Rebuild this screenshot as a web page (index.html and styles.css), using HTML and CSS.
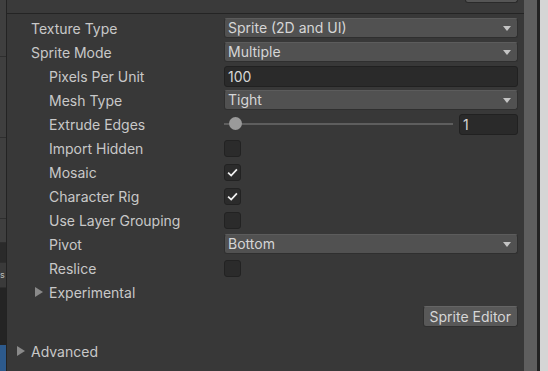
FILE: index.html
```html
<!DOCTYPE html>
<html lang="en">
<head>
  <meta charset="UTF-8" />
  <title>Import Settings</title>
  <link rel="stylesheet" href="styles.css">
</head>
<body>
  <div class="window">
    <div class="side">
      <div class="side-block b1"></div>
      <div class="side-block b2"></div>
      <div class="side-block b3"></div>
      <div class="side-block b4"></div>
      <div class="side-block b5"></div>
      <div class="side-block b6">s</div>
      <div class="side-block b7"></div>
      <div class="side-block b8"></div>
    </div>

    <div class="inspector">
      <div class="topbar">
        <div class="top-button"></div>
      </div>

      <div class="props">
        <div class="row">
          <span class="label">Texture Type</span>
          <div class="dropdown">Sprite (2D and UI)<span class="arrow"></span></div>
        </div>
        <div class="row">
          <span class="label">Sprite Mode</span>
          <div class="dropdown">Multiple<span class="arrow"></span></div>
        </div>
        <div class="row sub">
          <span class="label">Pixels Per Unit</span>
          <div class="textfield">100</div>
        </div>
        <div class="row sub">
          <span class="label">Mesh Type</span>
          <div class="dropdown">Tight<span class="arrow"></span></div>
        </div>
        <div class="row sub">
          <span class="label">Extrude Edges</span>
          <div class="slider">
            <div class="track"><span class="thumb"></span></div>
            <div class="textfield int">1</div>
          </div>
        </div>
        <div class="row sub">
          <span class="label">Import Hidden</span>
          <span class="checkbox"></span>
        </div>
        <div class="row sub">
          <span class="label">Mosaic</span>
          <span class="checkbox checked"><svg viewBox="0 0 10 8" width="11" height="9"><path d="M1 4.2 L3.8 6.8 L9 1.2" fill="none" stroke="#f0f0f0" stroke-width="1.6"/></svg></span>
        </div>
        <div class="row sub">
          <span class="label">Character Rig</span>
          <span class="checkbox checked"><svg viewBox="0 0 10 8" width="11" height="9"><path d="M1 4.2 L3.8 6.8 L9 1.2" fill="none" stroke="#f0f0f0" stroke-width="1.6"/></svg></span>
        </div>
        <div class="row sub">
          <span class="label">Use Layer Grouping</span>
          <span class="checkbox"></span>
        </div>
        <div class="row sub">
          <span class="label">Pivot</span>
          <div class="dropdown">Bottom<span class="arrow"></span></div>
        </div>
        <div class="row sub">
          <span class="label">Reslice</span>
          <span class="checkbox"></span>
        </div>
        <div class="row foldout sub">
          <span class="fold"></span><span class="label">Experimental</span>
        </div>

        <div class="button-row">
          <button class="btn">Sprite Editor</button>
        </div>

        <div class="row foldout top">
          <span class="fold"></span><span class="label">Advanced</span>
        </div>
      </div>
    </div>

    <div class="scrollbar"></div>
    <div class="edge"></div>
    <div class="outside"></div>
  </div>
</body>
</html>
```

FILE: styles.css
```css
html, body {
  margin: 0;
  padding: 0;
  background: #383838;
}

body {
  font-family: Inter, "Noto Sans", sans-serif;
  font-size: 14px;
  color: #c8c8c8;
}

.window {
  display: flex;
  width: 548px;
  height: 371px;
  overflow: hidden;
}

/* left neighbour panel */
.side {
  width: 6px;
  display: flex;
  flex-direction: column;
  border-right: 1px solid #232323;
}

.side-block {
  border-bottom: 1px solid #2e2e2e;
}

.b1 { height: 56px; background: #3f3f3f; }
.b2 { height: 80px; background: #3f3f3f; }
.b3 { height: 80px; background: #3f3f3f; }
.b4 { height: 23px; background: #3f3f3f; }
.b5 { height: 19px; background: #2a2a2a; }
.b6 {
  height: 24px;
  background: #3a3a3a;
  font-size: 9px;
  line-height: 24px;
  overflow: hidden;
  color: #bdbdbd;
}
.b7 { height: 57px; background: #242424; border-bottom: none; }
.b8 { flex: 1; background: #2d5a8c; border-bottom: none; }

/* inspector */
.inspector {
  width: 517px;
  display: flex;
  flex-direction: column;
}

.topbar {
  height: 13px;
  background: #3a3a3a;
  border-bottom: 1px solid #242424;
  display: flex;
  justify-content: flex-end;
  padding-right: 6px;
}

.top-button {
  width: 51px;
  height: 2px;
  background: #555555;
  border: 1px solid #2a2a2a;
  border-top: none;
  border-radius: 0 0 3px 3px;
}

.props {
  padding: 2px 6px 0 24px;
}

.row {
  display: flex;
  align-items: center;
  height: 24px;
}

.label {
  width: 193px;
  white-space: nowrap;
}

.row.sub .label {
  width: 175px;
  padding-left: 18px;
}

.dropdown,
.textfield {
  flex: 1;
  height: 18px;
  line-height: 18px;
  padding: 0 3px;
  border-radius: 3px;
  position: relative;
  color: #d6d6d6;
}

.dropdown {
  background: #515151;
  border: 1px solid #2f2f2f;
  border-top-color: #5c5c5c;
}

.arrow {
  position: absolute;
  right: 6px;
  top: 7px;
  width: 0;
  height: 0;
  border-left: 4px solid transparent;
  border-right: 4px solid transparent;
  border-top: 5px solid #c4c4c4;
}

.textfield {
  background: #2a2a2a;
  border: 1px solid #212121;
  height: 19px;
  line-height: 19px;
}

.slider {
  flex: 1;
  display: flex;
  align-items: center;
  gap: 6px;
}

.track {
  flex: 1;
  height: 2px;
  background: #5e5e5e;
  position: relative;
}

.thumb {
  position: absolute;
  left: 5px;
  top: -6px;
  width: 13px;
  height: 13px;
  border-radius: 50%;
  background: #9a9a9a;
}

.textfield.int {
  flex: none;
  width: 51px;
}

.checkbox {
  width: 15px;
  height: 15px;
  background: #2b2b2b;
  border: 1px solid #222222;
  border-radius: 3px;
  display: flex;
  align-items: center;
  justify-content: center;
}

.foldout .label {
  width: auto;
}

.row.foldout.sub .label {
  padding-left: 0;
}

.fold {
  width: 0;
  height: 0;
  border-top: 5px solid transparent;
  border-bottom: 5px solid transparent;
  border-left: 8px solid #8a8a8a;
  margin-left: -14px;
  margin-right: 6px;
}

.row.foldout.sub .fold {
  margin-left: 4px;
}

.button-row {
  display: flex;
  justify-content: flex-end;
  margin-top: 2px;
}

.btn {
  font-family: Inter, "Noto Sans", sans-serif;
  font-size: 14px;
  color: #d6d6d6;
  background: #585858;
  border: 1px solid #2f2f2f;
  border-top-color: #656565;
  border-radius: 3px;
  height: 21px;
  padding: 0 6px;
}

.row.top {
  margin-top: 12px;
}

/* right edge */
.scrollbar {
  width: 13px;
  background: #5e5e5e;
}

.edge {
  width: 3px;
  background: #222222;
}

.outside {
  flex: 1;
  background: #d5d5d5;
}
```
